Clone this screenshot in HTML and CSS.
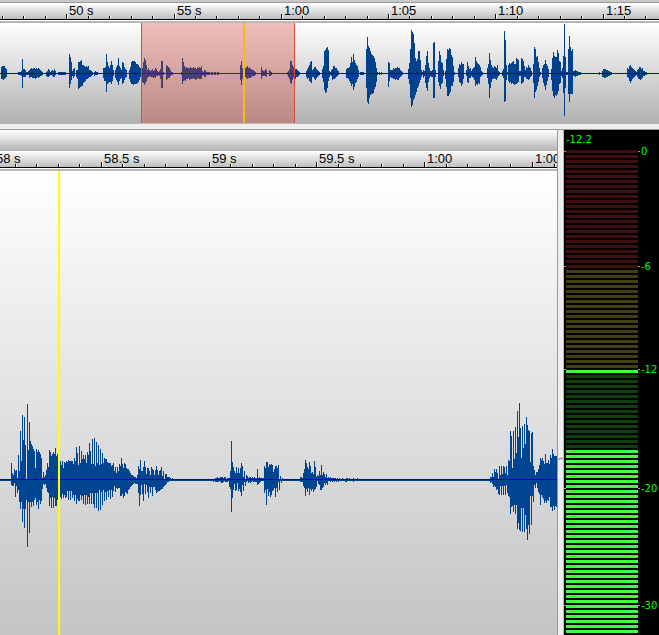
FILE: index.html
```
<!DOCTYPE html>
<html lang="en">
<head>
  <meta charset="UTF-8">
  <meta name="viewport" content="width=device-width, initial-scale=1.0">
  <title>Waveform Editor</title>
  <link rel="stylesheet" href="styles.css">
</head>
<body>
  <section class="overview">
    <svg class="ruler" data-ruler="overview"></svg>
    <div class="track track-overview">
      <svg class="wave" data-wave="overview"></svg>
      <div class="selection"></div>
      <div class="playhead playhead-overview"></div>
    </div>
  </section>

  <main class="workspace">
    <section class="editor">
      <div class="marker-bar"></div>
      <svg class="ruler" data-ruler="detail"></svg>
      <div class="track track-detail">
        <svg class="wave" data-wave="detail"></svg>
        <div class="playhead playhead-detail"></div>
      </div>
    </section>

    <div class="splitter">
      <svg class="grip" viewBox="0 0 5 4">
        <path d="M0 3.5L2 1.5H5" fill="none" stroke="#999" stroke-width="1.4"/>
        <path d="M0 3.8H2" fill="none" stroke="#fff" stroke-width="1"/>
      </svg>
    </div>

    <aside class="meter">
      <div class="peak">-12.2</div>
      <div class="meter-body">
        <div class="bars">
          <div class="zone zone-clip"></div>
          <div class="zone zone-warn"></div>
          <div class="zone zone-peak"></div>
          <div class="zone zone-off"></div>
          <div class="zone zone-on"></div>
        </div>
        <svg class="scale"></svg>
      </div>
    </aside>
  </main>

  <script src="wave.js"></script>
</body>
</html>
```
FILE: styles.css
```
* {
  box-sizing: border-box;
}
body {
  margin: 0;
  height: 100vh;
  display: flex;
  flex-direction: column;
  overflow: hidden;
  background-color: #eee;
  font-family: "Liberation Sans", Arial, Helvetica, sans-serif;
  font-size: 13px;
  color: #111;
}
svg {
  display: block;
}
.overview {
  border-top: 2px solid #c8c8c8;
  border-bottom: 1px solid #b8b8b8;
  box-shadow: inset 0 1px #999;
  padding-top: 1px;
}

/* time rulers */
.ruler {
  width: 100%;
  height: 20px;
  background: linear-gradient(#fff, #bebebe 16px, #000 16px, #000 17px, #fff 17px, #fff 18px, #b9b5b9 18px);
}
.ruler text {
  font-size: 13px;
  fill: #000;
}
.tick {
  fill: #000;
}
.tick-edge {
  fill: #fff;
}

/* waveform tracks */
.track {
  position: relative;
  overflow: hidden;
  background: linear-gradient(#fff, #b1b1b1);
}
.track-overview {
  height: 100px;
}
.track-detail {
  height: 617px;
}
.wave {
  width: 100%;
  height: 100%;
  shape-rendering: crispEdges;
}
.wave-body {
  fill: #004591;
}
.wave-zero {
  fill: #0000d0;
}
.track-overview .wave-body {
  fill: #00438c;
}
.selection {
  position: absolute;
  top: 0;
  bottom: 0;
  left: 141px;
  width: 154px;
  background-color: rgba(209, 58, 45, 0.33);
  border-left: 1px solid #d9493f;
  border-right: 1px solid #d9493f;
}
.playhead {
  position: absolute;
  top: 0;
  bottom: 0;
  width: 2px;
}
.playhead-overview {
  left: 243px;
  background-color: #f3bc0e;
}
.playhead-detail {
  left: 58px;
  background-color: #ff0;
}

/* lower half */
.workspace {
  flex: 1;
  min-height: 0;
  display: flex;
  margin-top: 5px;
  border-top: 1px solid #999;
  overflow: hidden;
}
.editor {
  flex: 1;
  min-width: 0;
}
.marker-bar {
  height: 21px;
  background: linear-gradient(#fff, #b4b4b4);
}
.splitter {
  flex: none;
  width: 7px;
  padding-top: 327px;
  background-color: #eee;
  border-left: 1px solid #999;
  border-right: 1px solid #bbb;
}
.grip {
  width: 5px;
  height: 4px;
}

/* level meter */
.meter {
  flex: none;
  width: 95px;
  display: flex;
  flex-direction: column;
  background-color: #000;
  color: #0f0;
  font-family: "DejaVu Sans", Verdana, sans-serif;
  font-size: 10px;
}
.peak {
  height: 20px;
  padding-left: 2px;
  line-height: 20px;
}
.meter-body {
  flex: 1;
  min-height: 0;
  display: grid;
}
.bars,
.scale {
  grid-area: 1 / 1;
}
.bars {
  width: 72px;
  margin-left: 2px;
  display: flex;
  flex-direction: column;
}
.scale {
  width: 100%;
  height: 100%;
  overflow: visible;
}
.scale text {
  font-size: 10px;
  fill: #0f0;
}
.scale rect {
  fill: #999;
}
.zone {
  flex: none;
  background: repeating-linear-gradient(currentColor 0, currentColor 3px, #000 3px, #000 5px);
}
.zone-clip {
  height: 120px;
  color: #401010;
}
.zone-warn {
  height: 100px;
  color: #404010;
}
.zone-peak {
  height: 5px;
  color: #40ff40;
}
.zone-off {
  height: 75px;
  color: #104010;
}
.zone-on {
  flex: 1;
  color: #40ff40;
}
```
FILE: wave.js
```
const SVG_NS = 'http://www.w3.org/2000/svg';

// start = x of the first major tick, step = distance between minor ticks
const rulers = {
  overview: { start: -41, step: 21.45, labels: ['', '50 s', '55 s', '1:00', '1:05', '1:10', '1:15'] },
  detail: { start: -7, step: 21.56, labels: ['58 s', '58.5 s', '59 s', '59.5 s', '1:00', '1:00.5'] }
};

// each run: first column, then above/below peak for every column after it
const waves = {
  overview: { zero: 50, runs: [
    [1, '6/5 7/5 7/6 7/5 5/4 4/3'],
    [18, '1/1 1/1 1/1 2/2 14/14 4/3 4/3 3/3 1/1 1/1 2/1 3/4 4/3 5/3 4/4 5/4 5/4 4/5 5/4 4/3 5/4 4/3 3/2 2/2 1/1'],
    [46, '1/2 2/3 4/3 3/2 1/1 2/1 3/2 2/3 4/3 2/1'],
    [58, '1/1 1/1 1/1 1/1 1/1 1/1 1/1 1/1'],
    [69, '19/14 16/10 11/6 2/2 4/4 5/2 0/0 3/3 3/5 11/15 11/14 12/13 13/12 8/12 8/9 7/8 6/7 7/5 6/5 7/4 3/3 3/3 2/2 1/1 0/0 1/2 2/1 1/1 1/1'],
    [103, '5/4 5/7 6/7 19/18 11/10 7/9 5/8 8/8 12/10 8/7 3/2 0/0 3/4 6/6 8/8 15/11 7/7 5/5 3/4 11/10 10/9 6/6 4/4 3/3'],
    [129, '3/5 6/8 11/10 12/10 12/11 12/10 11/10 9/10 9/9 8/8 6/6 5/3'],
    [142, '5/8 11/9 15/11 13/9 8/7 3/4 5/3 3/2 2/3 3/3 4/3 2/4 3/3 5/4 4/2 2/2 1/1 2/2 4/5 12/14 12/14 1/1 0/0 0/0 8/6 7/5 6/4 5/4 3/2 1/1 1/1'],
    [181, '1/1 15/10 11/7 7/6 5/7 6/5 5/5 5/4 5/6 6/5 5/5 5/5 6/4 5/5 5/6 4/5 6/5 5/4 6/5 5/5 7/5 2/2 1/1 3/3 3/3 1/1 1/1 1/1 1/1 0/0 1/1 1/1 0/0 1/1 1/1 0/0 1/1 1/1'],
    [240, '8/6 12/11 5/5 0/0 0/0 5/3 6/4 7/5 5/4 6/4 4/4 4/3 3/2 3/2 2/2 1/1'],
    [261, '6/5 3/2 2/2 2/2 4/2 3/3 0/0 0/0 3/2 2/2 1/1'],
    [287, '1/1 2/3 4/5 12/9 12/10 8/6 6/4 4/4 4/5 4/3 3/3 2/2 1/1'],
    [306, '2/3 4/5 6/4 8/7 11/8 12/9 3/3 4/3 6/5 6/6 4/4 3/3 2/2 1/1'],
    [322, '4/4 7/8 22/16 23/19 25/18 26/14 23/7 2/3 1/1 3/2 4/6 7/5 7/5 5/4 5/3 3/2 2/1'],
    [346, '4/4 5/4 5/5 6/7 10/9 16/12 11/10 19/16 13/13 10/9 8/8 7/5 3/3 0/0 1/1 1/1 1/1 1/1'],
    [366, '24/14 36/28 27/30 25/24 22/21 19/20 18/20 17/19 15/15 11/13 5/8 1/1 0/0 1/1 0/0 1/1'],
    [388, '11/13 10/7 3/3 3/4 3/4 5/5 4/5 5/6 5/5 6/6 5/6 5/4 3/3 2/2 1/1'],
    [408, '4/5 10/10 24/24 43/33 41/31 39/26 30/24 15/21 12/18 14/14 22/12 22/9 13/6 3/3 1/1 3/4 2/2 8/9 17/14 22/17 10/8 5/4 2/2 2/3 3/3 30/24 31/24 3/3 0/0 0/0 12/8 22/12 18/15 11/10 10/9 3/2'],
    [445, '2/5 14/13 24/22 23/22 25/20 24/18 18/12 16/12 7/8 1/1'],
    [458, '5/3 9/8 8/9 11/12 9/10 9/5'],
    [466, '3/2 11/8 7/9 4/4 5/4 2/2 4/3 5/4 6/6 16/12 12/10 10/11 9/9 8/10 6/3 2/2 1/1'],
    [487, '5/4 9/10 20/24 13/14 8/8 6/5 5/5 7/4 6/5 5/6 8/4 2/2 1/1'],
    [502, '2/2 4/4 42/28 33/27 8/6 1/1 8/7 10/9 9/8 10/10 11/9 12/10 9/11 9/10 15/10 14/9 13/8 2/2 2/2 15/10 14/9 12/8 7/3 3/3 6/5 5/5 8/6 6/5 5/3 2/2'],
    [533, '9/9 26/24 24/18 16/16 17/12 11/8 5/3 1/1 0/0 5/4 8/9 9/12 13/16 9/11 7/7 4/3'],
    [551, '4/6 15/17 21/22 17/24 16/21 16/22 23/20 20/17 12/10 11/9 2/2 5/4 17/19 49/42 16/14 1/1 1/1 24/20 37/28 26/20 22/20 24/20 2/2 2/2 3/3 2/2 2/2 1/1 1/1 1/1'],
    [599, '1/1 0/0 0/0 2/3 4/3 4/4 4/4 3/3 3/3 2/2 2/2 1/1 1/1'],
    [627, '5/3 4/4 7/7 8/9 6/7 5/5 4/4 3/3 2/2 1/1 3/3 4/5 6/5 6/6 4/5 5/4 2/2 2/2 1/1 1/1']
  ] },
  detail: { zero: 308, runs: [
    [11, '16/5 6/6 4/6 10/3 8/17 9/6 1/13 24/10 8/22 48/29 18/22 64/42 39/29 62/48 34/29 0/20 75/67 29/22 57/53 38/22 35/27 33/22 30/26 28/20 11/18 30/25 27/22 29/29 27/20 25/24 21/21 1/9 7/4 2/5 4/4 9/8 16/12 12/13 29/26 27/18 23/28 25/17 27/28 25/18 31/26 23/26 25/20 24/20 20/18'],
    [60, '18/17 14/19 18/14 11/18 17/15 16/18 18/17 17/11 19/20 18/11 18/20 18/11 18/18 15/15 21/21 18/15 32/24 26/19 14/21 33/21 16/15 28/20 20/16 24/24 20/15 24/25 16/15 27/24 24/17 36/24 28/13 15/24 40/13 15/24 41/28 13/13 37/28 16/13 34/31 14/10 30/30 15/12 26/25 16/10 21/21 20/12 20/20 17/11 16/17 16/10 16/19 13/10 14/17 16/11 8/6 12/12 6/8 12/9 8/8 15/8'],
    [120, '13/16 21/16 15/14 11/18 16/16 15/12 11/13 10/14 10/10 8/9 6/7 4/6 4/5 3/4 2/3 2/4 1/4 4/4 13/13 10/26 19/15 8/5 8/14 12/21 18/4 12/14 5/5 11/12 11/18 8/7 4/13 12/7 10/16 9/7 4/7 9/10 13/13 9/12 4/11 8/11 9/10 12/9 3/9 8/7 0/6 5/5 5/4 2/2 2/2 2/1 1/1 0/1 1/1'],
    [213, '0/2 0/1 1/2 1/2 2/2 1/2 1/1 2/2 2/3 2/3 1/2 2/1 2/2 0/2 1/2 1/1 1/7 8/9 38/32 17/18 12/10 8/4 6/11 12/10 6/3 11/11 6/9 11/12 16/16 13/5 2/11 8/2 0/6 4/2 3/1 1/3 2/2 2/3 1/2 2/1 1/2 2/2 1/2 1/2 10/5 1/4 2/3 1/2 1/1 1/1 1/1'],
    [264, '13/13 11/10 17/25 17/9 12/16 15/12 14/17 15/15 14/11 7/10 10/8 13/17 13/8 11/12 14/2 0/10 3/1 0/3 1/1'],
    [300, '2/2 2/2 1/2 6/6 10/8 19/16 16/9 12/12 10/8 17/15 13/9 6/11 7/9 5/12 18/10 12/9 2/7 4/1 3/4 8/5 4/10 14/10 4/8 7/7 5/3 2/5 5/3 1/5 2/1 1/1 2/2 1/1 1/2 1/1 1/2 1/1 0/2 1/1 0/2 1/1 0/1 0/1 1/1 0/1 0/1 0/2 1/2 1/1 0/1 1/1 0/1 0/1 0/1 1/2 0/1 0/1 0/1 1/1'],
    [490, '2/3 2/2 6/4 2/7 10/6 7/7 10/10 6/9 0/14 13/15 4/6 13/15 5/6 13/15 12/6 6/15 13/5 4/13 19/16 18/17 48/34 43/27 11/26 48/32 20/25 52/34 26/25 68/49 42/43 76/50 51/51 21/28 53/52 31/28 55/52 35/35 62/49 54/60 49/45 48/54 17/16 46/45 47/16 13/22 9/5 4/8 7/3 7/8 10/12 14/14 21/25 19/15 21/17 18/19 15/23 25/21 16/23 16/20 19/21 15/17 24/27 21/27 30/31 25/26 23/30 23/26 23/27']
  ] }
};

const scale = [
  { y: 1, label: '0' },
  { y: 116, label: '-6' },
  { y: 219, label: '-12' },
  { y: 338, label: '-20' },
  { y: 455, label: '-30' }
];

function add(parent, tag, attrs, text) {
  const el = document.createElementNS(SVG_NS, tag);
  for (const key in attrs) {
    el.setAttribute(key, attrs[key]);
  }
  if (text) el.textContent = text;
  parent.appendChild(el);
}

function drawRuler(svg, ruler) {
  const count = ruler.labels.length * 5;
  for (let i = 0; i < count; i++) {
    const x = Math.round(ruler.start + i * ruler.step);
    const h = i % 5 === 0 ? 5 : 3;
    add(svg, 'rect', { x: x, y: 16 - h, width: 1, height: h, class: 'tick' });
    add(svg, 'rect', { x: x + 1, y: 16 - h, width: 1, height: h, class: 'tick-edge' });
    if (i % 5 === 0 && ruler.labels[i / 5]) {
      add(svg, 'text', { x: x + 3, y: 12 }, ruler.labels[i / 5]);
    }
  }
}

function drawWave(svg, wave, baseline) {
  let d = '';
  wave.runs.forEach(([start, peaks]) => {
    peaks.split(' ').forEach((peak, i) => {
      const [up, down] = peak.split('/').map(Number);
      d += `M${start + i} ${wave.zero - up}h1v${up + down + 1}h-1z`;
    });
  });
  add(svg, 'path', { d: d, class: 'wave-body' });
  add(svg, 'rect', { x: 0, y: wave.zero, width: '100%', height: 1, class: 'wave-zero' });
  if (baseline) {
    add(svg, 'rect', { x: 0, y: wave.zero + 1, width: '100%', height: 1, class: 'wave-body' });
  }
}

document.querySelectorAll('[data-ruler]').forEach(svg => drawRuler(svg, rulers[svg.dataset.ruler]));
document.querySelectorAll('[data-wave]').forEach(svg => {
  drawWave(svg, waves[svg.dataset.wave], svg.dataset.wave === 'detail');
});

const scaleSvg = document.querySelector('.scale');
scale.forEach(mark => {
  add(scaleSvg, 'rect', { x: 0, y: mark.y, width: 2, height: 1 });
  add(scaleSvg, 'rect', { x: 74, y: mark.y, width: 2, height: 1 });
  add(scaleSvg, 'text', { x: 77, y: mark.y + 4 }, mark.label);
});
```
